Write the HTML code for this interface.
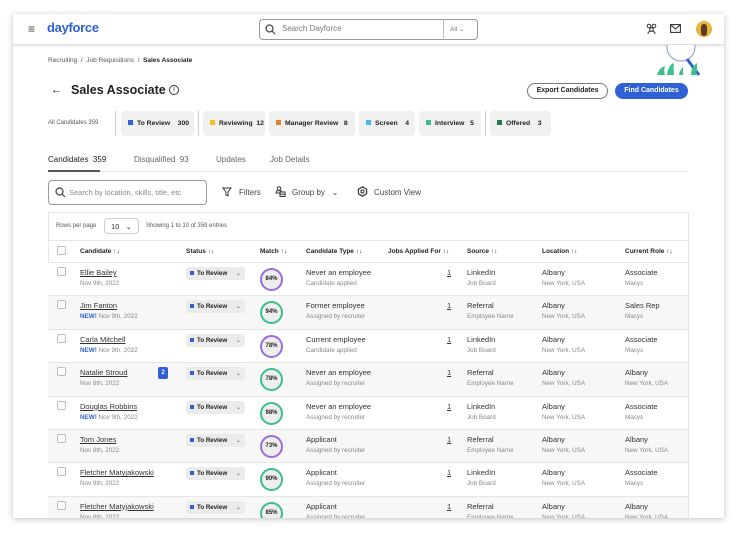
<!DOCTYPE html>
<html><head><meta charset="utf-8"><style>
*{box-sizing:border-box;margin:0;padding:0}
body{width:740px;height:535px;background:#fff;font-family:"Liberation Sans",sans-serif;color:#222;position:relative;overflow:hidden}
.card{position:absolute;left:13px;top:14px;width:711px;height:504px;background:#fff;box-shadow:0 1px 6px rgba(0,0,0,.25);overflow:hidden}
.a{position:absolute;white-space:nowrap}
.hdr{position:absolute;left:0;top:0;width:711px;height:31px;border-bottom:1px solid #ddd;box-shadow:0 1px 3px rgba(0,0,0,.12)}
.chip{position:absolute;top:97px;height:25px;background:#f0f0f0;border-radius:4px;font-size:6.8px;font-weight:bold;line-height:25px;padding-left:7px;white-space:nowrap}
.sq{display:inline-block;width:5px;height:5px;margin-right:4px;vertical-align:middle;position:relative;top:-1px}
.th{font-size:6.5px;font-weight:bold;color:#222}
.row{position:absolute;left:35px;width:640px;height:33.4px;border-top:1px solid #e6e6e6}
.cb{position:absolute;left:9px;top:4px;width:9px;height:9px;border:1px solid #bbb;border-radius:2px;background:#fff}
.nm{position:absolute;left:32px;top:5px;font-size:7.5px;text-decoration:underline;color:#333;white-space:nowrap}
.dt{position:absolute;left:32px;top:17px;font-size:6.3px;color:#888;white-space:nowrap}
.new{color:#2f61d5;font-weight:bold}
.st{position:absolute;left:138px;top:4px;width:59px;height:13px;background:#ebebeb;border-radius:3px;font-size:6.2px;font-weight:bold;line-height:13px;padding-left:4px;white-space:nowrap}
.st i{display:inline-block;width:4px;height:4px;background:#2f61d5;margin-right:3px}
.st b{position:absolute;right:4px;top:0;font-weight:normal;color:#555}
.mt{position:absolute;left:212px;top:5px;width:23px;height:23px;border-radius:50%;border:2px solid #3bbf8a;background:#eee;font-size:6px;font-weight:bold;text-align:center;line-height:19px}
.pu{border-color:#9b6ce0}
.t1{position:absolute;top:5px;font-size:7.5px;color:#333;white-space:nowrap}
.t2{position:absolute;top:17px;font-size:6.3px;color:#888;white-space:nowrap}
</style></head><body>
<div class="card">
<div class="hdr">
<div class="a" style="left:15px;top:8px;font-size:12px;color:#444">≡</div>
<div class="a" style="left:34px;top:6px;font-size:13px;color:#2f61d5;font-weight:bold;letter-spacing:-.3px">dayforce</div>
<div class="a" style="left:246px;top:5px;width:219px;height:21px;border:1px solid #999;border-radius:4px"></div>
<svg class="a" style="left:252px;top:10px" width="11" height="11" viewBox="0 0 11 11"><circle cx="4.5" cy="4.5" r="3.5" fill="none" stroke="#444" stroke-width="1.2"/><path d="M7 7l3 3" stroke="#444" stroke-width="1.2"/></svg>
<div class="a" style="left:269px;top:10px;font-size:8px;color:#777">Search Dayforce</div>
<div class="a" style="left:430px;top:5px;width:1px;height:21px;background:#bbb"></div>
<div class="a" style="left:437px;top:11px;font-size:6.5px;color:#777">All ⌄</div>
<svg class="a" style="left:633px;top:9px" width="11" height="12" viewBox="0 0 11 12"><circle cx="3" cy="3" r="1.8" fill="none" stroke="#333"/><circle cx="8" cy="3" r="1.8" fill="none" stroke="#333"/><circle cx="5.5" cy="6.5" r="1.8" fill="none" stroke="#333"/><path d="M2 11c0-2 1.5-3 3.5-3s3.5 1 3.5 3" fill="none" stroke="#333"/></svg>
<svg class="a" style="left:657px;top:10px" width="11" height="9" viewBox="0 0 11 9"><rect x=".6" y=".6" width="9.8" height="7.8" fill="none" stroke="#333" stroke-width="1.1"/><path d="M1 1l4.5 4 4.5-4" fill="none" stroke="#333" stroke-width="1.1"/></svg>
<div class="a" style="left:683px;top:7px;width:16px;height:16px;border-radius:50%;background:#e8b53a"><div style="position:absolute;left:5px;top:3px;width:6px;height:12px;border-radius:3px;background:#5a3a2a"></div></div>
</div>
<svg class="a" style="left:640px;top:31px" width="60" height="32" viewBox="0 0 60 32"><circle cx="28" cy="2" r="14" fill="#fff" stroke="#8893c8" stroke-width="1"/><path d="M34 14l12 16" stroke="#2f61d5" stroke-width="3"/><path d="M4 30c2-6 5-8 8-9-1 3-1 6 0 9z M14 30c1-8 4-11 7-12-1 4 0 9 0 12z M38 30c0-7 3-10 6-12 0 4 0 9-1 12z M26 30c1-5 3-7 4-8 0 3 0 6 0 8z" fill="#3bbf8a"/></svg>
<div class="a" style="left:35px;top:43px;font-size:6.5px;color:#555">Recruiting &nbsp;/&nbsp; Job Requisitions &nbsp;/&nbsp; <b style="color:#222">Sales Associate</b></div>
<div class="a" style="left:38px;top:70px;font-size:11px">←</div>
<div class="a" style="left:58px;top:69px;font-size:12.5px;font-weight:bold;color:#222">Sales Associate</div>
<div class="a" style="left:156px;top:71px;width:10px;height:10px;border:1px solid #333;border-radius:50%;font-size:7px;text-align:center;line-height:8px">i</div>
<div class="a" style="left:514px;top:69px;width:81px;height:16px;border:1px solid #777;border-radius:9px;font-size:7px;font-weight:bold;text-align:center;line-height:14px">Export Candidates</div>
<div class="a" style="left:602px;top:69px;width:73px;height:16px;background:#2f61d5;border-radius:9px;font-size:7px;font-weight:bold;color:#fff;text-align:center;line-height:16px">Find Candidates</div>
<div class="a" style="left:35px;top:106px;font-size:6px;color:#555">All Candidates 359</div>
<div class="a" style="left:102px;top:97px;width:1px;height:25px;background:#ccc"></div>
<div class="chip" style="left:108px;width:73px"><span class="sq" style="background:#2f61d5"></span>To Review &nbsp;&nbsp;&nbsp;300</div>
<div class="a" style="left:185px;top:97px;width:1px;height:25px;background:#ccc"></div>
<div class="chip" style="left:190px;width:62px"><span class="sq" style="background:#f2c01c"></span>Reviewing &nbsp;12</div>
<div class="chip" style="left:256px;width:86px"><span class="sq" style="background:#e8822a"></span>Manager Review &nbsp;&nbsp;8</div>
<div class="chip" style="left:346px;width:56px"><span class="sq" style="background:#4db6e8"></span>Screen &nbsp;&nbsp;&nbsp;4</div>
<div class="chip" style="left:406px;width:62px"><span class="sq" style="background:#3bbf8a"></span>Interview &nbsp;&nbsp;5</div>
<div class="a" style="left:472px;top:97px;width:1px;height:25px;background:#ccc"></div>
<div class="chip" style="left:477px;width:61px"><span class="sq" style="background:#1e7a4e"></span>Offered &nbsp;&nbsp;&nbsp;3</div>
<div class="a" style="left:35px;top:141px;font-size:8px;color:#222">Candidates &nbsp;359</div>
<div class="a" style="left:121px;top:141px;font-size:8px;color:#666">Disqualified &nbsp;93</div>
<div class="a" style="left:203px;top:141px;font-size:8px;color:#666">Updates</div>
<div class="a" style="left:257px;top:141px;font-size:8px;color:#666">Job Details</div>
<div class="a" style="left:35px;top:157px;width:640px;height:1px;background:#e3e3e3"></div>
<div class="a" style="left:35px;top:155.5px;width:52px;height:2px;background:#555"></div>
<div class="a" style="left:35px;top:166px;width:159px;height:25px;border:1px solid #999;border-radius:4px"></div>
<svg class="a" style="left:42px;top:173px" width="11" height="11" viewBox="0 0 11 11"><circle cx="4.5" cy="4.5" r="3.5" fill="none" stroke="#444" stroke-width="1.2"/><path d="M7 7l3 3" stroke="#444" stroke-width="1.2"/></svg>
<div class="a" style="left:56px;top:174px;font-size:7.5px;color:#888">Search by location, skills, title, etc</div>
<svg class="a" style="left:209px;top:173px" width="10" height="10" viewBox="0 0 10 10"><path d="M1 1h8L6 5v4L4 8V5z" fill="none" stroke="#333"/></svg>
<div class="a" style="left:226px;top:174px;font-size:8px;color:#444">Filters</div>
<svg class="a" style="left:262px;top:172px" width="11" height="11" viewBox="0 0 11 11"><circle cx="4" cy="2.5" r="1.8" fill="none" stroke="#333"/><path d="M1 7c0-2 1.5-2.5 3-2.5s3 .5 3 2.5z" fill="none" stroke="#333"/><rect x="5" y="6" width="5" height="4.5" fill="#fff" stroke="#333"/><path d="M5 8.2h5" stroke="#333"/></svg>
<div class="a" style="left:279px;top:174px;font-size:8px;color:#444">Group by &nbsp;&nbsp;⌄</div>
<svg class="a" style="left:344px;top:172px" width="11" height="11" viewBox="0 0 11 11"><path d="M5.5 .8l4.1 2.4v4.6L5.5 10.2 1.4 7.8V3.2z" fill="none" stroke="#333" stroke-width="1.2"/><circle cx="5.5" cy="5.5" r="1.6" fill="none" stroke="#333" stroke-width="1.1"/></svg>
<div class="a" style="left:361px;top:174px;font-size:8px;color:#444">Custom View</div>
<div class="a" style="left:35px;top:198px;width:641px;height:320px;border:1px solid #e6e6e6"></div>
<div class="a" style="left:43px;top:209px;font-size:6px;color:#555">Rows per page</div>
<div class="a" style="left:91px;top:204px;width:35px;height:16px;border:1px solid #ccc;border-radius:4px;font-size:7.5px;padding:3px 0 0 6px;color:#333">10 &nbsp;&nbsp;⌄</div>
<div class="a" style="left:133px;top:209px;font-size:6px;color:#555">Showing 1 to 10 of 359 entries</div>
<div class="a" style="left:35px;top:226px;width:640px;height:1px;background:#e6e6e6"></div>
<div class="a" style="left:44px;top:232px;width:9px;height:9px;border:1px solid #bbb;border-radius:2px"></div>
<div class="a th" style="left:67px;top:234px">Candidate ↑↓</div>
<div class="a th" style="left:173px;top:234px">Status ↑↓</div>
<div class="a th" style="left:247px;top:234px">Match ↑↓</div>
<div class="a th" style="left:293px;top:234px">Candidate Type ↑↓</div>
<div class="a th" style="left:375px;top:234px">Jobs Applied For ↑↓</div>
<div class="a th" style="left:454px;top:234px">Source ↑↓</div>
<div class="a th" style="left:529px;top:234px">Location ↑↓</div>
<div class="a th" style="left:612px;top:234px">Current Role ↑↓</div>

<div class="row" style="top:248px;background:#fff"><div class="cb"></div><div class="nm">Ellie Bailey</div><div class="dt">Nov 9th, 2022</div><div class="st"><i></i>To Review<b>⌄</b></div><div class="mt pu">84%</div><div class="t1" style="left:258px">Never an employee</div><div class="t2" style="left:258px">Candidate applied</div><div class="t1" style="left:399px;text-decoration:underline">1</div><div class="t1" style="left:419px">LinkedIn</div><div class="t2" style="left:419px">Job Board</div><div class="t1" style="left:494px">Albany</div><div class="t2" style="left:494px">New York, USA</div><div class="t1" style="left:577px">Associate</div><div class="t2" style="left:577px">Macys</div></div>

<div class="row" style="top:281.4px;background:#f7f7f7"><div class="cb"></div><div class="nm">Jim Fanton</div><div class="dt"><span class="new">NEW!</span> Nov 9th, 2022</div><div class="st"><i></i>To Review<b>⌄</b></div><div class="mt">94%</div><div class="t1" style="left:258px">Former employee</div><div class="t2" style="left:258px">Assigned by recruiter</div><div class="t1" style="left:399px;text-decoration:underline">1</div><div class="t1" style="left:419px">Referral</div><div class="t2" style="left:419px">Employee Name</div><div class="t1" style="left:494px">Albany</div><div class="t2" style="left:494px">New York, USA</div><div class="t1" style="left:577px">Sales Rep</div><div class="t2" style="left:577px">Macys</div></div>

<div class="row" style="top:314.8px;background:#fff"><div class="cb"></div><div class="nm">Carla Mitchell</div><div class="dt"><span class="new">NEW!</span> Nov 9th, 2022</div><div class="st"><i></i>To Review<b>⌄</b></div><div class="mt pu">78%</div><div class="t1" style="left:258px">Current employee</div><div class="t2" style="left:258px">Candidate applied</div><div class="t1" style="left:399px;text-decoration:underline">1</div><div class="t1" style="left:419px">LinkedIn</div><div class="t2" style="left:419px">Job Board</div><div class="t1" style="left:494px">Albany</div><div class="t2" style="left:494px">New York, USA</div><div class="t1" style="left:577px">Associate</div><div class="t2" style="left:577px">Macys</div></div>

<div class="row" style="top:348.2px;background:#f7f7f7"><div class="cb"></div><div class="nm">Natalie Stroud</div><div class="dt">Nov 8th, 2022</div><div class="a" style="left:110px;top:4px;width:10px;height:12px;background:#2f61d5;border-radius:2px;color:#fff;font-size:6px;font-weight:bold;text-align:center;line-height:12px">2</div><div class="st"><i></i>To Review<b>⌄</b></div><div class="mt">78%</div><div class="t1" style="left:258px">Never an employee</div><div class="t2" style="left:258px">Assigned by recruiter</div><div class="t1" style="left:399px;text-decoration:underline">1</div><div class="t1" style="left:419px">Referral</div><div class="t2" style="left:419px">Employee Name</div><div class="t1" style="left:494px">Albany</div><div class="t2" style="left:494px">New York, USA</div><div class="t1" style="left:577px">Albany</div><div class="t2" style="left:577px">New York, USA</div></div>

<div class="row" style="top:381.6px;background:#fff"><div class="cb"></div><div class="nm">Douglas Robbins</div><div class="dt"><span class="new">NEW!</span> Nov 9th, 2022</div><div class="st"><i></i>To Review<b>⌄</b></div><div class="mt">98%</div><div class="t1" style="left:258px">Never an employee</div><div class="t2" style="left:258px">Assigned by recruiter</div><div class="t1" style="left:399px;text-decoration:underline">1</div><div class="t1" style="left:419px">LinkedIn</div><div class="t2" style="left:419px">Job Board</div><div class="t1" style="left:494px">Albany</div><div class="t2" style="left:494px">New York, USA</div><div class="t1" style="left:577px">Associate</div><div class="t2" style="left:577px">Macys</div></div>

<div class="row" style="top:415px;background:#f7f7f7"><div class="cb"></div><div class="nm">Tom Jones</div><div class="dt">Nov 8th, 2022</div><div class="st"><i></i>To Review<b>⌄</b></div><div class="mt pu">73%</div><div class="t1" style="left:258px">Applicant</div><div class="t2" style="left:258px">Assigned by recruiter</div><div class="t1" style="left:399px;text-decoration:underline">1</div><div class="t1" style="left:419px">Referral</div><div class="t2" style="left:419px">Employee Name</div><div class="t1" style="left:494px">Albany</div><div class="t2" style="left:494px">New York, USA</div><div class="t1" style="left:577px">Albany</div><div class="t2" style="left:577px">New York, USA</div></div>

<div class="row" style="top:448.4px;background:#fff"><div class="cb"></div><div class="nm">Fletcher Matyjakowski</div><div class="dt">Nov 8th, 2022</div><div class="st"><i></i>To Review<b>⌄</b></div><div class="mt">90%</div><div class="t1" style="left:258px">Applicant</div><div class="t2" style="left:258px">Assigned by recruiter</div><div class="t1" style="left:399px;text-decoration:underline">1</div><div class="t1" style="left:419px">LinkedIn</div><div class="t2" style="left:419px">Job Board</div><div class="t1" style="left:494px">Albany</div><div class="t2" style="left:494px">New York, USA</div><div class="t1" style="left:577px">Associate</div><div class="t2" style="left:577px">Macys</div></div>

<div class="row" style="top:481.8px;background:#f7f7f7"><div class="cb"></div><div class="nm">Fletcher Matyjakowski</div><div class="dt">Nov 8th, 2022</div><div class="st"><i></i>To Review<b>⌄</b></div><div class="mt">85%</div><div class="t1" style="left:258px">Applicant</div><div class="t2" style="left:258px">Assigned by recruiter</div><div class="t1" style="left:399px;text-decoration:underline">1</div><div class="t1" style="left:419px">Referral</div><div class="t2" style="left:419px">Employee Name</div><div class="t1" style="left:494px">Albany</div><div class="t2" style="left:494px">New York, USA</div><div class="t1" style="left:577px">Albany</div><div class="t2" style="left:577px">New York, USA</div></div>
</div>
</body></html>
